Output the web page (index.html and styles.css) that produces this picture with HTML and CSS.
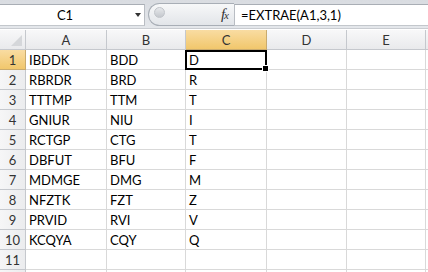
FILE: index.html
```html
<!DOCTYPE html>
<html>
<head>
<meta charset="utf-8">
<link rel="stylesheet" href="styles.css">
</head>
<body>
<div class="app">
  <div class="fbar">
    <div class="namebox">
      <span class="nb-text">C1</span>
      <span class="nb-arrow"></span>
    </div>
    <div class="pill">
      <span class="knob"></span>
      <span class="fx"><i>f</i><i class="fx-x">x</i></span>
    </div>
    <div class="formula">=EXTRAE(A1,3,1)</div>
  </div>
  <div class="sheet">
    <div class="hd corner"><span class="tri"></span></div>
    <div class="hd col">A</div>
    <div class="hd col">B</div>
    <div class="hd col hsel">C</div>
    <div class="hd col">D</div>
    <div class="hd col">E</div>
    <div class="hd col"></div>

    <div class="hd row hsel">1</div><div class="c">IBDDK</div><div class="c">BDD</div><div class="c sel">D<span class="handle"></span></div><div class="c"></div><div class="c"></div><div class="c"></div>
    <div class="hd row">2</div><div class="c">RBRDR</div><div class="c">BRD</div><div class="c">R</div><div class="c"></div><div class="c"></div><div class="c"></div>
    <div class="hd row">3</div><div class="c">TTTMP</div><div class="c">TTM</div><div class="c">T</div><div class="c"></div><div class="c"></div><div class="c"></div>
    <div class="hd row">4</div><div class="c">GNIUR</div><div class="c">NIU</div><div class="c">I</div><div class="c"></div><div class="c"></div><div class="c"></div>
    <div class="hd row">5</div><div class="c">RCTGP</div><div class="c">CTG</div><div class="c">T</div><div class="c"></div><div class="c"></div><div class="c"></div>
    <div class="hd row">6</div><div class="c">DBFUT</div><div class="c">BFU</div><div class="c">F</div><div class="c"></div><div class="c"></div><div class="c"></div>
    <div class="hd row">7</div><div class="c">MDMGE</div><div class="c">DMG</div><div class="c">M</div><div class="c"></div><div class="c"></div><div class="c"></div>
    <div class="hd row">8</div><div class="c">NFZTK</div><div class="c">FZT</div><div class="c">Z</div><div class="c"></div><div class="c"></div><div class="c"></div>
    <div class="hd row">9</div><div class="c">PRVID</div><div class="c">RVI</div><div class="c">V</div><div class="c"></div><div class="c"></div><div class="c"></div>
    <div class="hd row">10</div><div class="c">KCQYA</div><div class="c">CQY</div><div class="c">Q</div><div class="c"></div><div class="c"></div><div class="c"></div>
    <div class="hd row">11</div><div class="c"></div><div class="c"></div><div class="c"></div><div class="c"></div><div class="c"></div><div class="c"></div>
    <div class="hd row"></div><div class="c"></div><div class="c"></div><div class="c"></div><div class="c"></div><div class="c"></div><div class="c"></div>
  </div>
</div>
</body>
</html>
```

FILE: styles.css
```css
html, body {
  margin: 0;
  padding: 0;
  width: 428px;
  height: 272px;
  overflow: hidden;
  background: #ffffff;
}

.app {
  font-family: Lato, "Liberation Sans", sans-serif;
  font-size: 13px;
  color: #000;
  height: 272px;
  overflow: hidden;
}

/* formula bar */
.fbar {
  height: 29px;
  box-sizing: border-box;
  background: linear-gradient(#d9dce1, #e4e7eb);
  border-bottom: 1px solid #c9ccd1;
  display: flex;
  align-items: flex-start;
  padding-top: 3px;
}

.namebox {
  width: 145px;
  height: 22px;
  margin-top: 1px;
  box-sizing: border-box;
  background: #fff;
  border-top: 1px solid #a9aeb5;
  border-bottom: 1px solid #c3c7cc;
  border-right: 1px solid #b9bdc3;
  display: flex;
  align-items: center;
}

.nb-text {
  width: 130px;
  text-align: center;
  line-height: 20px;
}

.nb-arrow {
  width: 0;
  height: 0;
  border-left: 3.5px solid transparent;
  border-right: 3.5px solid transparent;
  border-top: 4px solid #333;
  margin-left: 5px;
}

.pill {
  width: 86px;
  height: 23px;
  margin-left: 3px;
  box-sizing: border-box;
  border: 1px solid #a8aeb6;
  border-right: none;
  border-radius: 12px 0 0 12px;
  background: linear-gradient(#f7f8f9, #e2e5e9);
  display: flex;
  align-items: center;
  justify-content: space-between;
  padding-left: 5px;
  padding-right: 6px;
}

.knob {
  width: 9px;
  height: 9px;
  border-radius: 50%;
  background: linear-gradient(#e6e8eb, #c4c8cd);
  border: 1px solid #c0c4c9;
  margin-top: -4px;
}

.fx {
  font-family: "Liberation Serif", serif;
  font-size: 15px;
  color: #333;
  line-height: 20px;
  letter-spacing: -1px;
}

.fx-x {
  font-size: 11px;
}

.formula {
  flex: 1;
  height: 22px;
  margin-top: 1px;
  box-sizing: border-box;
  background: #fff;
  border-top: 1px solid #a9aeb5;
  border-bottom: 1px solid #c3c7cc;
  border-left: 1px solid #b9bdc3;
  line-height: 20px;
  padding-left: 6px;
}

/* sheet grid */
.sheet {
  display: grid;
  grid-template-columns: 26px 81px 79px 81px 80px 79px 1fr;
  grid-auto-rows: 20px;
  margin-top: 1px;
}

.hd {
  box-sizing: border-box;
  background: linear-gradient(#f8f8f9, #e9eaec);
  border-right: 1px solid #c5c8cd;
  border-bottom: 1px solid #c5c8cd;
  color: #333;
  text-align: center;
  line-height: 19px;
}

.hd.col {
  line-height: 20px;
}

.hd.row {
  background: linear-gradient(90deg, #f6f6f7, #ebecee);
  line-height: 20px;
}

.hd.hsel {
  background: linear-gradient(#f9dca2, #f1c76c);
  border-right-color: #c9ab6e;
  border-bottom-color: #c9ab6e;
}

.corner {
  position: relative;
}

.tri {
  position: absolute;
  right: 3px;
  bottom: 3px;
  width: 0;
  height: 0;
  border-left: 11px solid transparent;
  border-bottom: 11px solid #d5d7da;
}

.c {
  box-sizing: border-box;
  border-right: 1px solid #d9d9d9;
  border-bottom: 1px solid #d9d9d9;
  padding-left: 3px;
  line-height: 21px;
  overflow: hidden;
  white-space: nowrap;
}

.c.sel {
  position: relative;
  overflow: visible;
}

.c.sel::after {
  content: "";
  position: absolute;
  left: -1px;
  top: 0;
  right: -1px;
  bottom: -1px;
  border: 2px solid #000;
  pointer-events: none;
}

.handle {
  position: absolute;
  right: -3px;
  bottom: -3px;
  width: 5px;
  height: 5px;
  background: #000;
  border: 1px solid #fff;
  z-index: 2;
}
```
